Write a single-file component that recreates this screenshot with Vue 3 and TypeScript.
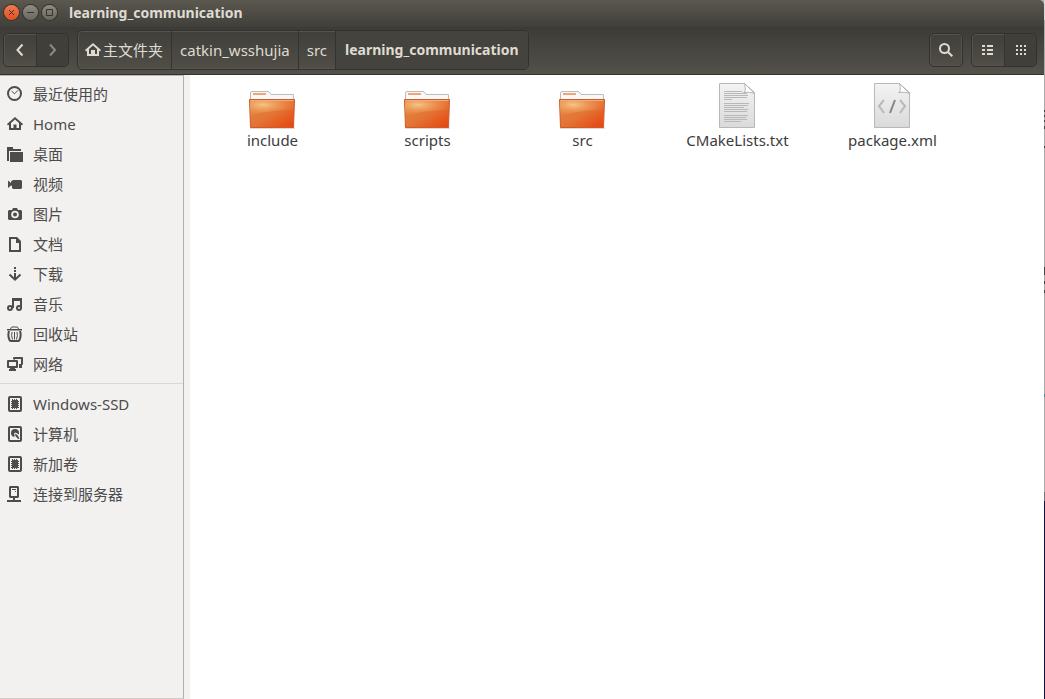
<script setup lang="ts">
import { ref } from 'vue'

interface Place { icon: string; label: string }
interface Entry { kind: 'folder' | 'text' | 'xml'; name: string }

const title = 'learning_communication'
const crumbs = ['主文件夹', 'catkin_wsshujia', 'src', 'learning_communication']
const sections: Place[][] = [
  [
    { icon: 'recent', label: '最近使用的' },
    { icon: 'home', label: 'Home' },
    { icon: 'desktop', label: '桌面' },
    { icon: 'video', label: '视频' },
    { icon: 'camera', label: '图片' },
    { icon: 'document', label: '文档' },
    { icon: 'download', label: '下载' },
    { icon: 'music', label: '音乐' },
    { icon: 'trash', label: '回收站' },
    { icon: 'network', label: '网络' },
  ],
  [
    { icon: 'ssd', label: 'Windows-SSD' },
    { icon: 'disk', label: '计算机' },
    { icon: 'ssd', label: '新加卷' },
    { icon: 'server', label: '连接到服务器' },
  ],
]
const entries: Entry[] = [
  { kind: 'folder', name: 'include' },
  { kind: 'folder', name: 'scripts' },
  { kind: 'folder', name: 'src' },
  { kind: 'text', name: 'CMakeLists.txt' },
  { kind: 'xml', name: 'package.xml' },
]
const view = ref<'list' | 'grid'>('grid')
</script>

<template>
  <div class="screen">
    <div class="window">
      <header class="titlebar">
        <button class="win close" aria-label="Close">
          <svg viewBox="0 0 15 15"><path d="M5 5l5 5M10 5l-5 5" /></svg>
        </button>
        <button class="win" aria-label="Minimize">
          <svg viewBox="0 0 15 15"><path d="M4 7.5h7" /></svg>
        </button>
        <button class="win" aria-label="Maximize">
          <svg viewBox="0 0 15 15"><path d="M4.500 4.500h6v6h-6z" /></svg>
        </button>
        <h1>{{ title }}</h1>
      </header>

      <div class="toolbar">
        <div class="group">
          <button class="tool" aria-label="Back">
            <svg viewBox="0 0 16 16"><path class="line" d="M10.500 2.500L5.500 8l5 5.500" /></svg>
          </button>
          <button class="tool off" aria-label="Forward" disabled>
            <svg viewBox="0 0 16 16"><path class="line" d="M5 2.500L10 8l-5 5.500" /></svg>
          </button>
        </div>
        <nav class="group path" aria-label="Path">
          <button v-for="(c, i) in crumbs" :key="c" class="crumb" :class="{ first: i === 0, current: i === 3 }">
            <svg v-if="i === 0" viewBox="0 0 16 16"><path fill-rule="evenodd" d="M8 1L0 8l1 1.500 1-.7V14h12V8.800l1 .7L16 8zM8 3.500l4 3.600V12h-2V8H6v4H4V7.100z" /></svg>
            <span>{{ c }}</span>
          </button>
        </nav>
        <div class="group search">
          <button class="tool" aria-label="Search">
            <svg viewBox="0 0 16 16"><circle class="line" cx="6.500" cy="6.500" r="4.500" /><path class="line" d="M9.700 9.700l4.600 4.600" /></svg>
          </button>
        </div>
        <div class="group">
          <button class="tool" :class="{ pressed: view === 'list' }" aria-label="List view" @click="view = 'list'">
            <svg viewBox="0 0 16 16"><path d="M2 3h3v2H2zM7 3h6v2H7zM2 7h3v2H2zM7 7h6v2H7zM2 11h3v2H2zM7 11h6v2H7z" /></svg>
          </button>
          <button class="tool" :class="{ pressed: view === 'grid' }" aria-label="Icon view" @click="view = 'grid'">
            <svg viewBox="0 0 16 16"><path d="M3 3h2v2H3zM7 3h2v2H7zM11 3h2v2h-2zM3 7h2v2H3zM7 7h2v2H7zM11 7h2v2h-2zM3 11h2v2H3zM7 11h2v2H7zM11 11h2v2h-2z" /></svg>
          </button>
        </div>
      </div>

      <div class="body">
        <aside class="sidebar">
          <ul v-for="(s, n) in sections" :key="n" class="places">
            <li v-for="p in s" :key="p.label">
              <a href="#" class="place">
                <svg viewBox="0 0 16 16">
                  <template v-if="p.icon === 'recent'">
                    <circle class="line" cx="7.500" cy="7.500" r="6.500" />
                    <path class="thin" d="M4.500 5L7.500 7.800 11 4.300" />
                  </template>
                  <path v-else-if="p.icon === 'home'" fill-rule="evenodd" d="M8 1L0 8l1 1.500 1-.7V14h12V8.800l1 .7L16 8zM8 3.500l4 3.600V12H9.500V8.500h-3V12H4V7.100z" />
                  <template v-else-if="p.icon === 'desktop'">
                    <path d="M0 1h6v2h8v2H2v10H0z" /><path d="M3 6h13v10H3z" />
                  </template>
                  <path v-else-if="p.icon === 'video'" d="M1 4.500l3 2.500V5.500L6 4h8l1 1v7l-1 1H6l-1-1v-2l-1-.5-3 2.500z" />
                  <template v-else-if="p.icon === 'camera'">
                    <path fill-rule="evenodd" d="M2 4h3l1-2h4l1 2h3l1 1v8l-1 1H2l-1-1V5zM8 4.700a3.800 3.800 0 1 0 0 7.600 3.800 3.800 0 0 0 0-7.600z" />
                    <circle cx="8" cy="8.500" r="2" />
                  </template>
                  <path v-else-if="p.icon === 'document'" fill-rule="evenodd" d="M2 1h8l4 4v11H2zM4 3v11h8V7H9V3z" />
                  <template v-else-if="p.icon === 'download'">
                    <path d="M7 1h2v2H7zM7 4h2v2H7zM7 7h2v6H7z" /><path class="line" d="M2.500 8.500L8 13.700l5.500-5.200" />
                  </template>
                  <template v-else-if="p.icon === 'music'">
                    <circle class="line" cx="3" cy="12" r="2" /><circle class="line" cx="12" cy="12" r="2" />
                    <path d="M5 2h10v10h-2V5H7v7H5z" />
                  </template>
                  <template v-else-if="p.icon === 'trash'">
                    <path d="M0 3h15v1.500H0z" />
                    <path class="thin" d="M3.500 3q.5-2 1.500-2h5q1 0 1.500 2M5 6q-1 3.500.5 7.500M10 6q1 3.500-.5 7.500M7.500 6v7.500" />
                    <path class="line" d="M2 5q-1.500 5 .5 9 .5 1 1.500 1h7q1 0 1.500-1 2-4 .5-9" />
                  </template>
                  <template v-else-if="p.icon === 'network'">
                    <path d="M6 3V2q0-1 1-1h8q1 0 1 1v6q0 1-1 1v3h-3V8h2V3H8v1z" />
                    <path fill-rule="evenodd" d="M1 4h9q1 0 1 1v6q0 1-1 1H8v1h1v2H2v-2h1v-1H1q-1 0-1-1V5q0-1 1-1zM2 6v4h7V6z" />
                  </template>
                  <template v-else-if="p.icon === 'ssd'">
                    <rect class="line" x="2" y="1" width="12" height="14" rx="1" />
                    <path d="M5 4h6v8H5zM4 5h8v1H4zM4 7h8v1H4zM4 9h8v1H4zM4 11h8v1H4zM5 3h1v10H5zM7 3h1v10H7zM9 3h1v10H9z" />
                  </template>
                  <template v-else-if="p.icon === 'disk'">
                    <rect class="line" x="2" y="1" width="12" height="14" rx="1" />
                    <path d="M8 3a4 4 0 0 0-4 4q0 3.500 3.500 4L7.500 9 7 7.500 8.500 6.500 12 8.500V7a4 4 0 0 0-4-4z" />
                    <path d="M8 7.500l2.500 1.500 2 3.500-1.500.5-2.500-3z" />
                  </template>
                  <template v-else>
                    <path fill-rule="evenodd" d="M3 0h8l1 1v10l-1 1H8v2h6v2H0v-2h6v-2H3l-1-1V1zM4 2v8h6V2z" /><path d="M5 3h4v1H5zM8 5h1v1H8z" />
                  </template>
                </svg>
                <span>{{ p.label }}</span>
              </a>
            </li>
          </ul>
        </aside>

        <main class="files">
          <button v-for="e in entries" :key="e.name" class="file">
            <svg v-if="e.kind === 'folder'" viewBox="1 0 48 48">
              <defs>
                <linearGradient id="orange" x1="0" y1="0" x2="1" y2="1">
                  <stop offset="0" stop-color="#e0873f" /><stop offset=".5" stop-color="#e37536" /><stop offset="1" stop-color="#e8420c" />
                </linearGradient>
                <radialGradient id="glow" cx=".3" cy=".3" r=".8">
                  <stop offset="0" stop-color="#f8cd90" stop-opacity=".9" /><stop offset="1" stop-color="#f08a45" stop-opacity="0" />
                </radialGradient>
              </defs>
              <rect x="2" y="45" width="45" height="2" rx="1" fill="#000" opacity=".15" />
              <path d="M2.500 19V11q0-1.500 1.500-1.500h16q1 0 2 1.500l1 1.500h22.500V20z" fill="#f8f8f8" stroke="#bcbcbc" />
              <rect x="5" y="11" width="13" height="2" fill="#f2a477" />
              <path d="M1.500 17.500h45l-1 28h-43z" fill="url(#orange)" stroke="#cf5a2a" />
              <path d="M2 18h44l-.5 10Q20 28 2 34z" fill="url(#glow)" />
              <path d="M2.500 18.500h43" stroke="#f0ac7a" />
            </svg>
            <svg v-else viewBox="1 0 48 48">
              <defs>
                <linearGradient id="paper" x1="0" y1="0" x2="0" y2="1">
                  <stop offset="0" stop-color="#f3f3f3" /><stop offset="1" stop-color="#dadada" />
                </linearGradient>
              </defs>
              <path d="M6.500 1.500h25l10 9v35h-35z" fill="url(#paper)" stroke="#b8b8b8" />
              <path d="M31.500 1.500q2 9-1 9 7-1 11 1z" fill="#fff" stroke="#b5b5b5" />
              <path v-if="e.kind === 'text'" stroke="#b8b8b8" d="M11 9.500h18M11 11.500h23M11 13.500h24M11 15.500h23M11 17.500h8M11 21.500h25M11 23.500h24M11 25.500h20M11 27.500h24M11 29.500h23M11 33.500h24M11 35.500h22M11 37.500h23M11 39.500h17" />
              <g v-else fill="none" stroke-width="2">
                <path d="M16 18l-5 6 5 7M32 18l5 6-5 7" stroke="#b9b9b9" /><path d="M27 18l-5 13" stroke="#858585" />
              </g>
            </svg>
            <span>{{ e.name }}</span>
          </button>
        </main>
      </div>
    </div>
    <div class="edge" aria-hidden="true"></div>
  </div>
</template>

<style>
body { margin: 0; }
</style>

<style scoped>
.screen {
  display: flex;
  min-height: 100vh;
  background: #b0b0b0;
  font: 15px/20px "Noto Sans", "Noto Sans CJK SC", sans-serif;
}
.window { flex: 1; min-width: 0; display: flex; flex-direction: column; }
.edge {
  width: 1px;
  background: linear-gradient(#d8d8d8 0 20px, #aaa 20px 110px, #444 110px 112px, #aaa 112px 115px, #444 115px 117px, #aaa 117px 120px, #444 120px 122px, #aaa 122px 126px, #444 126px 129px, #aaa 129px 146px, #444 146px 148px, #aaa 148px 267px, #444 267px 275px, #aaa 275px 281px, #444 281px 284px, #aaa 284px 290px, #444 290px 293px, #aaa 293px 394px, #4b8f96 394px 397px, #aaa 397px 492px, #777 492px 501px, #10103f 501px);
}
button { font: inherit; margin: 0; padding: 0; border: 0; background: none; color: inherit; }
.titlebar {
  display: flex;
  align-items: center;
  gap: 4px;
  height: 27px;
  box-sizing: border-box;
  padding: 0 4px 2px;
  border-radius: 0 5px 0 0;
  background: linear-gradient(#5b584f, #403f3a);
}
.win {
  width: 15px;
  height: 15px;
  border-radius: 50%;
  background: linear-gradient(#8f8c83, #69665e);
  box-shadow: 0 0 0 1px #35342f;
}
.win svg { display: block; width: 15px; height: 15px; fill: none; stroke: #35342f; }
.close { background: linear-gradient(#f4794f, #e2501f); }
h1 { margin: 0 0 0 8px; font-size: 14px; line-height: 20px; font-weight: 700; color: #dfdbd2; }
.toolbar {
  display: flex;
  align-items: center;
  gap: 8px;
  box-sizing: border-box;
  height: 48px;
  padding: 0 7px 1px 3px;
  border-bottom: 1px solid #33322e;
  background: linear-gradient(#3c3b37, #53514a);
  color: #dfdbd2;
}
.group {
  display: flex;
  border: 1px solid #32312d;
  border-radius: 5px;
  overflow: hidden;
  background: linear-gradient(#403f3a, #504e47);
  box-shadow: inset 0 0 0 1px #56544c;
}
.search { margin-left: auto; }
.tool { display: grid; place-items: center; width: 32px; height: 32px; }
.tool svg, .crumb svg { width: 16px; height: 16px; fill: currentColor; }
.tool + .tool, .crumb + .crumb { border-left: 1px solid #34332f; }
.off { color: #8d8a82; background: #403f3a; }
.pressed { background: #403f3a; }
.crumb { display: flex; align-items: center; gap: 2px; height: 38px; padding: 0 8px; }
.first { padding-left: 7px; }
.current { padding: 0 9px; font-size: 14px; font-weight: 700; background: #45433e; }
.line { fill: none; stroke: currentColor; stroke-width: 2; }
.thin { fill: none; stroke: currentColor; stroke-width: 1; }
.body { flex: 1; display: flex; background: #fff; }
.sidebar {
  width: 183px;
  padding-top: 3px;
  border-top: 1px solid #b9b7b4;
  border-right: 1px solid #b0b0ae;
  border-bottom: 1px solid #d2cdc8;
  background: #f2f1f0;
  color: #4c4c4c;
}
.places { list-style: none; margin: 0; padding: 0; }
.places + .places { margin-top: 4px; padding-top: 5px; border-top: 1px solid #dad8d6; }
.place { display: flex; align-items: center; gap: 10px; height: 30px; padding-left: 7px; color: inherit; text-decoration: none; }
.place svg { width: 16px; height: 16px; fill: currentColor; }
.files {
  flex: 1;
  display: grid;
  grid-template-columns: repeat(auto-fill, 155px);
  align-content: start;
  padding: 7px 0 0 5px;
  border-left: 6px solid #f2f1f0;
}
.file { display: flex; flex-direction: column; align-items: center; color: #3c3c3c; }
.file svg { width: 48px; height: 48px; }
</style>
